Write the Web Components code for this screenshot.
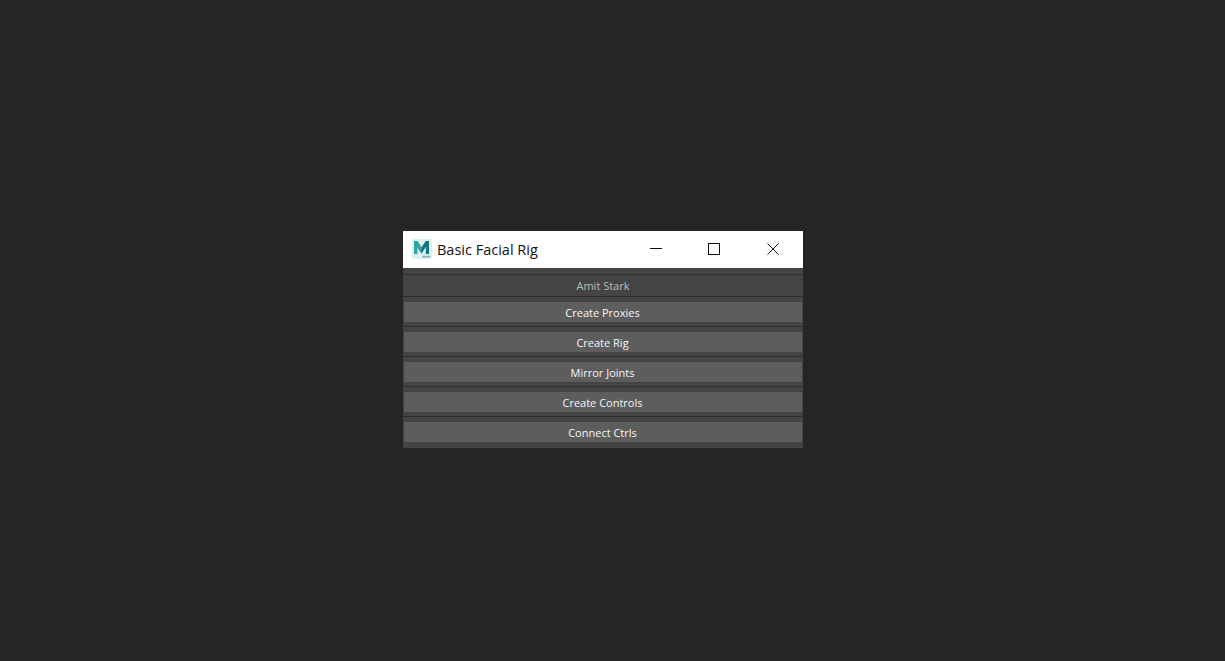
<!DOCTYPE html>
<html lang="en">
<head>
    <meta charset="UTF-8">
    <title>Basic Facial Rig</title>
    <style>
        html, body { margin: 0; height: 100%; background: #252525; }
        body { padding: 231px 0 0 403px; box-sizing: border-box; overflow: hidden; }
    </style>
</head>
<body>
<rig-window heading="Basic Facial Rig">
    <rig-label>Amit Stark</rig-label>
    <rig-button>Create Proxies</rig-button>
    <rig-button>Create Rig</rig-button>
    <rig-button>Mirror Joints</rig-button>
    <rig-button>Create Controls</rig-button>
    <rig-button>Connect Ctrls</rig-button>
</rig-window>

<template id="window-tpl">
    <style>
        :host { display: block; width: 400px; height: 217px; background: #444; }
        .bar { display: flex; align-items: center; height: 37px; background: #fff; color: #111;
            font: 14.5px "Open Sans", "Noto Sans", sans-serif; }
        .logo { width: 20px; height: 20px; margin: 0 5px 1px 9px; flex: none; }
        .name { flex: 1; white-space: nowrap; }
        .ctl { display: flex; flex: none; align-self: flex-start; }
        .ctl span { display: flex; justify-content: center; width: 58px; padding-top: 12px; }
        .ctl span:last-child { width: 60px; }
        .ctl svg { display: block; }
        .body { display: flex; flex-direction: column; }
    </style>
    <div class="bar">
        <svg class="logo" viewBox="0 0 20 20">
            <rect width="20" height="20" fill="#dcf1f2"/>
            <path d="M2 15V2h3.300L9.500 8.500 13.700 2H17v13h-3.200V8L9.500 14.500 5.200 8v7z" fill="#14757f"/>
            <path d="M2 2h3.300l4.200 6.500v6L5.200 8v7H2z" fill="#2ea5a7"/>
            <rect x="10.500" y="16.800" width="7.500" height="1.700" fill="#7fb2b7"/>
        </svg>
        <span class="name"></span>
        <div class="ctl">
            <span><svg width="12" height="12" viewBox="0 0 12 12"><path d="M0 5.500h12" stroke="#111"/></svg></span>
            <span><svg width="12" height="12" viewBox="0 0 12 12"><rect x=".5" y=".5" width="11" height="11" fill="none" stroke="#111"/></svg></span>
            <span><svg width="12" height="12" viewBox="0 0 12 12"><path d="M.5 .5l11 11M11.500 .5l-11 11" stroke="#111" fill="none"/></svg></span>
        </div>
    </div>
    <div class="body"><slot></slot></div>
</template>

<template id="label-tpl">
    <style>
        :host { display: block; margin-top: 6px; height: 23px; box-sizing: border-box; border-top: 1px solid #2f2f2f;
            border-bottom: 1px solid #2f2f2f; background: #444; color: #bcbcbc; text-align: center;
            font: 11px/22px "Open Sans", "Noto Sans", sans-serif; }
    </style>
    <slot></slot>
</template>

<template id="button-tpl">
    <style>
        :host { display: block; }
        .rule { height: 1px; background: #2f2f2f; margin-top: 4px; }
        button { display: block; box-sizing: border-box; width: 398px; height: 20px; margin: 5px 1px 0; padding: 0 1px 0 0;
            border: 0; background: #5d5d5d; color: #f6f6f6; font: 11px "Open Sans", "Noto Sans", sans-serif; }
        :host(:first-of-type) .rule { display: none; }
    </style>
    <div class="rule"></div>
    <button><slot></slot></button>
</template>

<script>
    function stamp(el, id) {
        let root = el.attachShadow({mode: 'open'});
        root.appendChild(document.getElementById(id).content.cloneNode(true));
        return root;
    }

    customElements.define('rig-window', class extends HTMLElement {
        constructor() {
            super();
            this.root = stamp(this, 'window-tpl');
        }
        connectedCallback() {
            this.root.querySelector('.name').textContent = this.getAttribute('heading');
        }
    });
    customElements.define('rig-label', class extends HTMLElement {
        constructor() {
            super();
            stamp(this, 'label-tpl');
        }
    });
    customElements.define('rig-button', class extends HTMLElement {
        constructor() {
            super();
            stamp(this, 'button-tpl');
        }
    });
</script>
</body>
</html>
